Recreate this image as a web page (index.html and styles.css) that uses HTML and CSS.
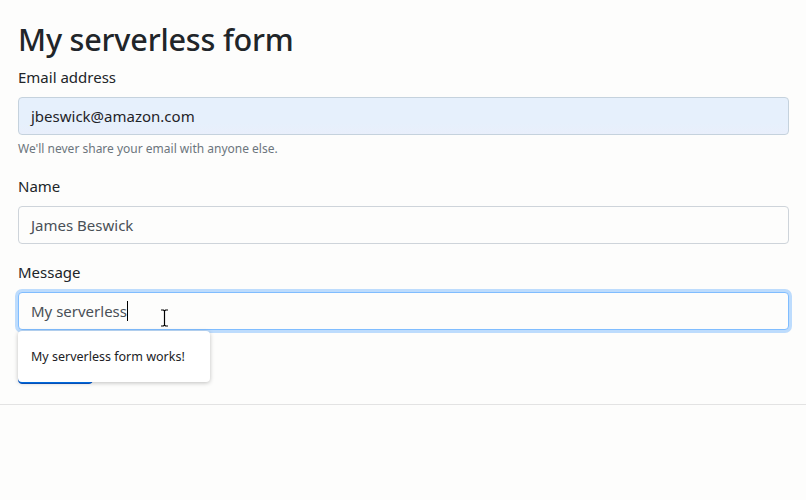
FILE: index.html
```html
<!DOCTYPE html>
<html>
<head>
<meta charset="utf-8">
<title>My serverless form</title>
<link rel="stylesheet" href="styles.css">
</head>
<body>
<div class="container">
  <h1 class="title">My serverless form</h1>
  <form class="form">
    <div class="group">
      <label class="label">Email address</label>
      <div class="field field-autofill">jbeswick@amazon.com</div>
      <small class="help">We'll never share your email with anyone else.</small>
    </div>
    <div class="group">
      <label class="label">Name</label>
      <div class="field">James Beswick</div>
    </div>
    <div class="group group-message">
      <label class="label">Message</label>
      <div class="field field-focus"><span class="typed">My serverless</span><span class="caret"></span></div>
      <svg class="ibeam" width="9" height="18" viewBox="0 0 9 18" aria-hidden="true">
        <path d="M1 1h2.5l1 1 1-1H8M4.5 2v14M1 17h2.5l1-1 1 1H8" fill="none" stroke="#fff" stroke-width="3"/>
        <path d="M1 1h2.5l1 1 1-1H8M4.5 2v14M1 17h2.5l1-1 1 1H8" fill="none" stroke="#000" stroke-width="1.2"/>
      </svg>
      <div class="suggest">My serverless form works!</div>
    </div>
    <button class="btn" type="button" aria-label="Submit"></button>
  </form>
</div>
<hr class="rule">
</body>
</html>
```
FILE: styles.css
```css
html, body {
  margin: 0;
  padding: 0;
  background: #fdfdfc;
}
body {
  font-family: "Noto Sans", "Open Sans", sans-serif;
  color: #212529;
  font-size: 15px;
}
.container {
  padding: 19px 17px 0 18px;
}
.title {
  margin: 0 0 6px;
  font-size: 30.6px;
  line-height: 40px;
  font-weight: 500;
  letter-spacing: -0.2px;
}
.form {
  display: flex;
  flex-direction: column;
}
.group {
  display: flex;
  flex-direction: column;
  margin-bottom: 16px;
  position: relative;
}
.label {
  font-size: 15px;
  line-height: 24px;
  margin-bottom: 8px;
}
.field {
  box-sizing: border-box;
  height: 38px;
  border: 1px solid #ced4da;
  border-radius: 4px;
  padding: 0 12px;
  display: flex;
  align-items: center;
  font-size: 15px;
  color: #495057;
  background: #fdfdfc;
}
.field-autofill {
  background: linear-gradient(#e6f0fc, #e6f0fc 70%, #e9effb);
  border-color: #c5d2dd;
  color: #1f2328;
}
.field-focus {
  border-color: #80bdff;
  box-shadow: 0 0 0 3px rgba(0, 123, 255, 0.25);
}
.caret {
  width: 1px;
  height: 20px;
  background: #000;
}
.help {
  margin-top: 4px;
  font-size: 12px;
  line-height: 19px;
  color: #6c757d;
}
.ibeam {
  position: absolute;
  left: 142px;
  top: 49px;
}
.suggest {
  position: absolute;
  left: 0;
  top: 71px;
  width: 192px;
  height: 51px;
  box-sizing: border-box;
  padding-left: 13px;
  display: flex;
  align-items: center;
  background: #fff;
  border-radius: 4px;
  box-shadow: 0 1px 4px rgba(0, 0, 0, 0.25);
  font-size: 12.5px;
  color: #202124;
  z-index: 2;
}
.btn {
  align-self: flex-start;
  height: 38px;
  width: 75px;
  border: 1px solid #0a58ca;
  border-radius: 4px;
  background: #007bff;
}
.rule {
  margin: 20px 0 0;
  border: 0;
  border-top: 1px solid #e3e3e3;
}
```
